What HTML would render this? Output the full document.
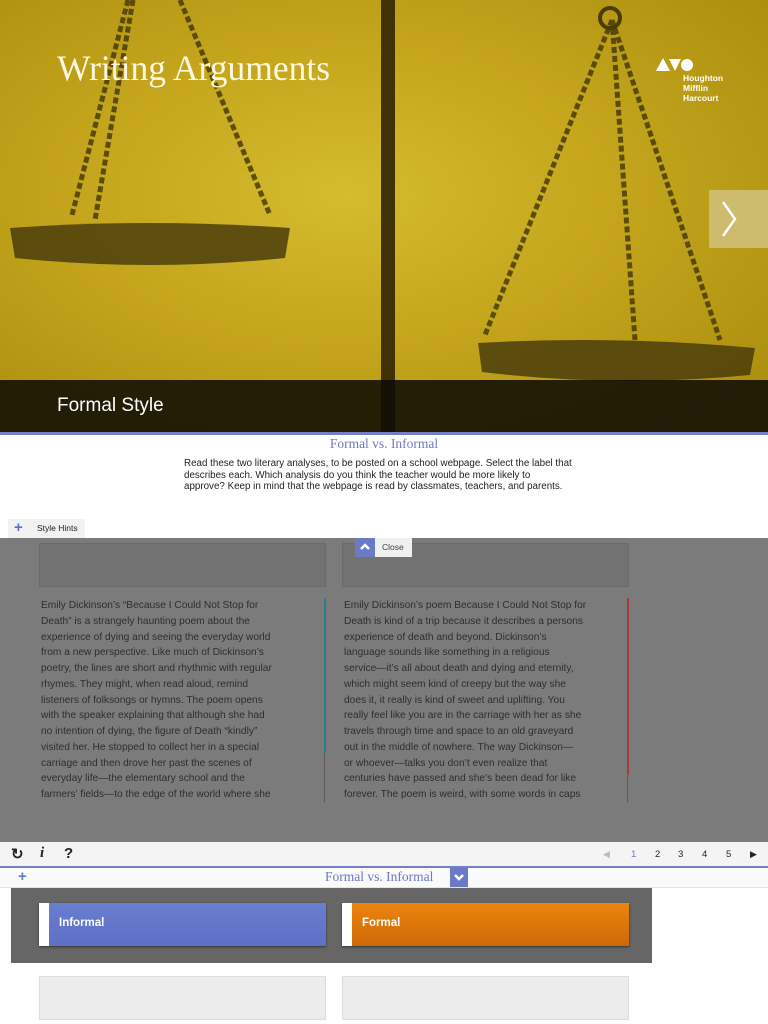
<!DOCTYPE html>
<html><head><meta charset="utf-8"><style>
*{margin:0;padding:0;box-sizing:border-box}
body{width:768px;height:1024px;overflow:hidden;background:#fff;font-family:"Liberation Sans",sans-serif;position:relative}
.abs{position:absolute}
.hero{left:0;top:0;width:768px;height:432px;background:radial-gradient(ellipse at 45% 45%,#d6bb2e 0%,#c4a51c 45%,#a88a0c 100%)}
.title{left:57px;top:47px;font-family:"Liberation Serif",serif;font-size:35.5px;color:#fff8e0}
.bar{left:0;top:380px;width:768px;height:52px;background:rgba(15,12,5,0.88)}
.fs{left:57px;top:395px;color:#fff;font-size:19px}
.p{font-size:10.2px;color:#2e2e2e;line-height:15.75px;white-space:nowrap}
</style></head><body>
<div class="abs hero"></div>
<svg class="abs" style="left:0;top:0" width="768" height="432">
<g fill="none" stroke="#4a3d08" stroke-width="5" stroke-dasharray="6 3" opacity="0.85">
<path d="M128 0 L72 215"/><path d="M133 0 L95 220"/><path d="M180 0 L270 215"/>
<path d="M612 20 L485 335"/><path d="M612 20 L635 340"/><path d="M612 20 L720 340"/>
</g>
<rect x="381" y="0" width="14" height="432" fill="#3f3306"/>
<circle cx="610" cy="18" r="10" fill="none" stroke="#4a3d08" stroke-width="4"/>
<path d="M10 228 Q150 218 290 228 L285 258 Q150 272 15 258 Z" fill="#4a3d0c" opacity="0.85"/>
<path d="M478 343 Q615 335 755 348 L750 375 Q615 388 482 372 Z" fill="#4a3d0c" opacity="0.85"/>
</svg>
<div class="abs title">Writing Arguments</div>
<svg class="abs" style="left:656px;top:58px" width="40" height="14"><polygon points="0,13 7,0 14,13" fill="#fff"/><polygon points="13,1 19,13 25,1" fill="#fff"/><circle cx="31" cy="7" r="6" fill="#fff"/></svg>
<div class="abs" style="left:683px;top:73px;color:#fff;font-size:8.5px;line-height:10px;font-weight:bold">Houghton<br>Mifflin<br>Harcourt</div>
<div class="abs" style="left:709px;top:190px;width:59px;height:58px;background:#cdbb6e"></div>
<svg class="abs" style="left:718px;top:198px" width="24" height="42"><path d="M5 4 L17 21 L5 38" fill="none" stroke="#fff" stroke-width="2.5"/></svg>
<div class="abs bar"></div>
<div class="abs fs">Formal Style</div>
<div class="abs" style="left:0;top:432px;width:768px;height:3px;background:#7380c8"></div>
<div class="abs" style="left:0;top:435px;width:768px;height:103px;background:#fff"></div>
<div class="abs" style="left:0;top:436px;width:768px;text-align:center;font-family:'Liberation Serif',serif;font-size:13.5px;color:#6a79c2">Formal vs. Informal</div>
<div class="abs" style="left:184px;top:458px;font-size:9.8px;line-height:11.5px;color:#222">Read these two literary analyses, to be posted on a school webpage. Select the label that<br>describes each. Which analysis do you think the teacher would be more likely to<br>approve? Keep in mind that the webpage is read by classmates, teachers, and parents.</div>
<div class="abs" style="left:8px;top:519px;width:77px;height:19px;background:#f2f2f2"></div>
<div class="abs" style="left:14px;top:519px;color:#5a6ec4;font-size:15px;font-weight:bold">+</div>
<div class="abs" style="left:37px;top:523px;font-size:8.5px;color:#222">Style Hints</div>
<div class="abs" style="left:0;top:538px;width:768px;height:304px;background:#7b7b7b"></div>
<div class="abs" style="left:39px;top:543px;width:287px;height:44px;background:#727272;border:1px solid #6a6a6a"></div>
<div class="abs" style="left:342px;top:543px;width:287px;height:44px;background:#727272;border:1px solid #6a6a6a"></div>
<div class="abs" style="left:355px;top:538px;width:20px;height:19px;background:#6a7ac4"></div>
<svg class="abs" style="left:359px;top:541px" width="12" height="12"><path d="M2 8 L6 4 L10 8" fill="none" stroke="#fff" stroke-width="2.5"/></svg>
<div class="abs" style="left:375px;top:538px;width:37px;height:19px;background:#f0f0f0"></div>
<div class="abs" style="left:382px;top:542px;font-size:8.5px;color:#444">Close</div>
<div class="abs" style="left:324px;top:598px;width:2px;height:155px;background:#2a7f8c"></div>
<div class="abs" style="left:324px;top:753px;width:1px;height:50px;background:#5c5c5c"></div>
<div class="abs" style="left:627px;top:598px;width:2px;height:177px;background:#a83a3a"></div>
<div class="abs" style="left:627px;top:775px;width:1px;height:28px;background:#5c5c5c"></div>
<div class="abs p" style="left:41px;top:598px">Emily Dickinson’s “Because I Could Not Stop for<br>Death” is a strangely haunting poem about the<br>experience of dying and seeing the everyday world<br>from a new perspective. Like much of Dickinson’s<br>poetry, the lines are short and rhythmic with regular<br>rhymes. They might, when read aloud, remind<br>listeners of folksongs or hymns. The poem opens<br>with the speaker explaining that although she had<br>no intention of dying, the figure of Death “kindly”<br>visited her. He stopped to collect her in a special<br>carriage and then drove her past the scenes of<br>everyday life—the elementary school and the<br>farmers’ fields—to the edge of the world where she</div>
<div class="abs p" style="left:344px;top:598px">Emily Dickinson’s poem Because I Could Not Stop for<br>Death is kind of a trip because it describes a persons<br>experience of death and beyond. Dickinson’s<br>language sounds like something in a religious<br>service—it’s all about death and dying and eternity,<br>which might seem kind of creepy but the way she<br>does it, it really is kind of sweet and uplifting. You<br>really feel like you are in the carriage with her as she<br>travels through time and space to an old graveyard<br>out in the middle of nowhere. The way Dickinson—<br>or whoever—talks you don’t even realize that<br>centuries have passed and she’s been dead for like<br>forever. The poem is weird, with some words in caps</div>
<div class="abs" style="left:0;top:842px;width:768px;height:24px;background:#f4f4f4"></div>
<div class="abs" style="left:11px;top:845px;font-size:15px;font-weight:bold;color:#222">↻</div>
<div class="abs" style="left:40px;top:845px;font-size:15px;font-weight:bold;font-style:italic;color:#222;font-family:'Liberation Serif',serif">i</div>
<div class="abs" style="left:64px;top:845px;font-size:15px;font-weight:bold;color:#222">?</div>
<div class="abs" style="left:603px;top:849px;font-size:9px;color:#bbb">◀</div>
<div class="abs" style="left:631px;top:849px;font-size:9.5px;color:#6a7ac4">1</div>
<div class="abs" style="left:655px;top:849px;font-size:9.5px;color:#222">2</div>
<div class="abs" style="left:678px;top:849px;font-size:9.5px;color:#222">3</div>
<div class="abs" style="left:702px;top:849px;font-size:9.5px;color:#222">4</div>
<div class="abs" style="left:726px;top:849px;font-size:9.5px;color:#222">5</div>
<div class="abs" style="left:750px;top:849px;font-size:9px;color:#222">▶</div>
<div class="abs" style="left:0;top:866px;width:768px;height:2px;background:#7380c8"></div>
<div class="abs" style="left:0;top:868px;width:768px;height:20px;background:#fafafa;border-bottom:1px solid #e4e4e4"></div>
<div class="abs" style="left:18px;top:868px;color:#6a7ac4;font-size:15px;font-weight:bold">+</div>
<div class="abs" style="left:325px;top:869px;font-family:'Liberation Serif',serif;font-size:13.5px;color:#6a79c2">Formal vs. Informal</div>
<div class="abs" style="left:450px;top:868px;width:18px;height:19px;background:#6a7ac4"></div>
<svg class="abs" style="left:453px;top:871px" width="12" height="12"><path d="M2 4 L6 8 L10 4" fill="none" stroke="#fff" stroke-width="2.5"/></svg>
<div class="abs" style="left:11px;top:888px;width:641px;height:75px;background:#666"></div>
<div class="abs" style="left:39px;top:903px;width:287px;height:43px;background:linear-gradient(#6a7ed0,#5d70c4);border-left:10px solid #fff;box-shadow:0 1px 2px #333"></div>
<div class="abs" style="left:59px;top:917px;color:#fff;font-size:11.5px;font-weight:bold">Informal</div>
<div class="abs" style="left:342px;top:903px;width:287px;height:43px;background:linear-gradient(#ee840f,#cc6a08);border-left:10px solid #fff;box-shadow:0 1px 2px #333"></div>
<div class="abs" style="left:362px;top:917px;color:#fff;font-size:11.5px;font-weight:bold">Formal</div>
<div class="abs" style="left:39px;top:976px;width:287px;height:44px;background:#ececec;border:1px solid #ddd"></div>
<div class="abs" style="left:342px;top:976px;width:287px;height:44px;background:#ececec;border:1px solid #ddd"></div>
</body></html>
